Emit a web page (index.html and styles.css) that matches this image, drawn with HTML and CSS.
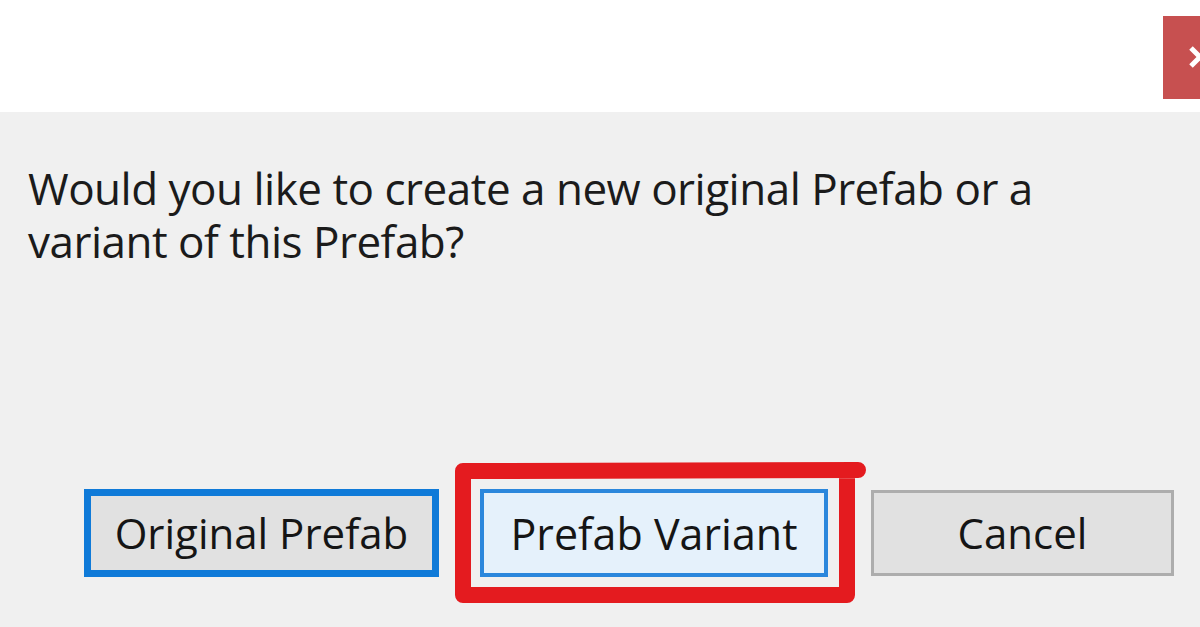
FILE: index.html
```html
<!DOCTYPE html>
<html lang="en">
<head>
<meta charset="utf-8">
<title>Prefab dialog</title>
<link rel="stylesheet" href="styles.css">
</head>
<body>
<div class="window">
  <div class="titlebar">
    <div class="close-btn">
      <svg class="close-x" width="37" height="83" viewBox="0 0 37 83">
        <path d="M28 32 L46 50 M46 32 L28 50" stroke="#ffffff" stroke-width="5" fill="none"/>
      </svg>
    </div>
  </div>
  <div class="content">
    <p class="message">Would you like to create a new original Prefab or a<br>variant of this Prefab?</p>
    <div class="buttons">
      <button class="btn btn-default">Original Prefab</button>
      <button class="btn btn-hover">Prefab Variant</button>
      <button class="btn btn-plain">Cancel</button>
    </div>
  </div>
  <svg class="annotation" width="1200" height="627" viewBox="0 0 1200 627">
    <path d="M463 595 L463 471 L858 470 M847 472 L847 595 L463 595" stroke="#e41b1f" stroke-width="16" fill="none" stroke-linecap="round" stroke-linejoin="round"/>
  </svg>
</div>
</body>
</html>
```
FILE: styles.css
```css
html, body {
  margin: 0;
  padding: 0;
}
body {
  width: 1200px;
  height: 627px;
  overflow: hidden;
  background: #f0f0f0;
  font-family: "Open Sans", "Noto Sans", sans-serif;
}
.window {
  position: relative;
  width: 1200px;
  height: 627px;
  display: flex;
  flex-direction: column;
}
.titlebar {
  height: 112px;
  background: #ffffff;
  display: flex;
  justify-content: flex-end;
  align-items: flex-start;
  padding-top: 16px;
  box-sizing: border-box;
}
.close-btn {
  width: 37px;
  height: 83px;
  background: #c75050;
  overflow: hidden;
}
.close-x {
  display: block;
}
.content {
  flex: 1;
  background: #f0f0f0;
  display: flex;
  flex-direction: column;
}
.message {
  margin: 50px 0 0 28px;
  font-size: 44px;
  letter-spacing: -0.5px;
  line-height: 53px;
  color: #1b1b1b;
}
.buttons {
  margin-top: auto;
  margin-bottom: 50px;
  padding-left: 84px;
  display: flex;
  align-items: center;
}
.btn {
  font-family: "Open Sans", "Noto Sans", sans-serif;
  font-size: 42px;
  color: #151515;
  height: 88px;
  box-sizing: border-box;
  padding: 0;
  margin: 0;
  line-height: 1;
}
.btn-default {
  width: 355px;
  background: #e1e1e1;
  border: 7px solid #0f7ad8;
}
.btn-hover {
  width: 348px;
  margin-left: 41px;
  background: #e5f1fb;
  border: 4px solid #2b87dc;
  font-size: 43px;
}
.btn-plain {
  width: 303px;
  height: 86px;
  margin-left: 43px;
  background: #e1e1e1;
  border: 3px solid #adadad;
}
.annotation {
  position: absolute;
  left: 0;
  top: 0;
  pointer-events: none;
}
```
